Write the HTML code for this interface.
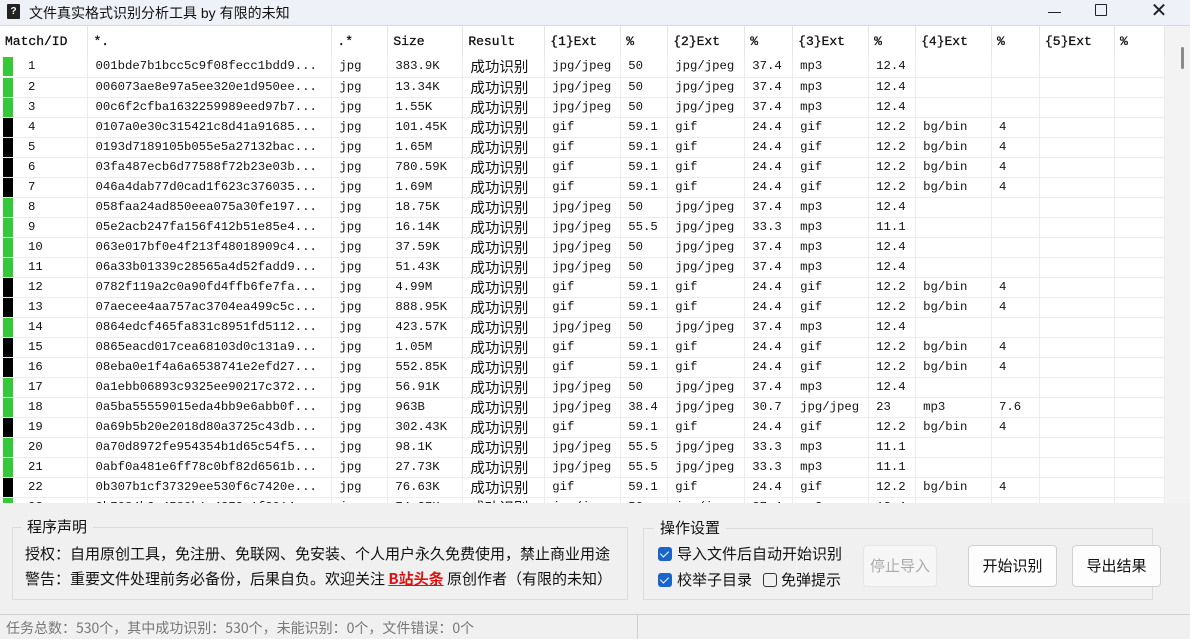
<!DOCTYPE html>
<html><head><meta charset="utf-8"><style>
*{margin:0;padding:0;box-sizing:border-box}
body{width:1190px;height:638px;overflow:hidden;background:#f0f0f0;font-family:"Liberation Sans","Noto Sans CJK SC",sans-serif;position:relative}
.title{position:absolute;left:0;top:0;width:1190px;height:26px;background:#eef2f8;border-bottom:1px solid #d6d9de}
.title .ic{position:absolute;left:7px;top:4px;width:13px;height:15px;background:#222;color:#fff;font:bold 10px "Liberation Sans";text-align:center;line-height:15px;border-radius:1px}
.title .t{position:absolute;left:29px;top:3px;font-size:14px;color:#111}
.wc{position:absolute;top:0;height:26px;width:46px;text-align:center}
.grid{position:absolute;left:0;top:26px;width:1165px;height:477px;overflow:hidden;background:#fff}
table{border-collapse:collapse;table-layout:fixed;font-family:"Liberation Mono","Noto Sans CJK SC",monospace;font-size:12.3px;color:#111}
td,th{border-right:1px solid #ececec;border-bottom:1px solid #ececec;height:20px;max-height:20px;white-space:nowrap;overflow:hidden;text-align:left;font-weight:normal;padding-left:7px;line-height:19px}
th{height:31px;font-size:13px;border-right:1px solid #e6e6e6;border-bottom:none;padding-left:5px;-webkit-text-stroke:0.3px #111}
td.c{font-family:"Noto Sans CJK SC",sans-serif;font-size:14.5px;line-height:17px;padding-top:0}
td.m{padding:0;position:relative}
td.m i{position:absolute;left:3px;top:0;width:10px;height:19px;background:#35c83a}
td.m.b i{background:#000}
td.m span{position:absolute;left:28px;top:0}
.sb{position:absolute;left:1165px;top:26px;width:25px;height:477px;background:#f3f3f3}
.sb i{position:absolute;left:16px;top:21px;width:3px;height:22px;background:#8a8a8a;border-radius:2px}
.gb{position:absolute;border:1px solid #dcdcdc;font-family:"Noto Sans CJK SC",sans-serif;font-size:15px;color:#111}
.gb .lg{position:absolute;top:-12px;background:#f0f0f0;padding:0 6px}
.btn{position:absolute;top:545px;height:42px;width:89px;border:1px solid #d0d0d0;border-radius:4px;background:#fdfdfd;font-family:"Noto Sans CJK SC",sans-serif;font-size:15px;text-align:center;line-height:40px;color:#111}
.cb{position:absolute;width:14px;height:14px;border-radius:3px;background:#1a66c8}
.cb:after{content:"";position:absolute;left:4px;top:2px;width:4px;height:7px;border:solid #fff;border-width:0 1.5px 1.5px 0;transform:rotate(45deg)}
.status{position:absolute;left:0;top:614px;width:1190px;height:24px;border-top:1px solid #cfcfcf;font-family:"Noto Sans CJK SC",sans-serif;font-size:14px;color:#777;padding:3px 0 0 6px}
</style></head><body>
<div class="title"><div class="ic">?</div><div class="t">文件真实格式识别分析工具 by 有限的未知</div>
<div class="wc" style="left:1031px"><div style="position:absolute;left:17px;top:12px;width:13px;height:1px;background:#222"></div></div>
<div class="wc" style="left:1078px"><div style="position:absolute;left:17px;top:4px;width:12px;height:12px;border:1px solid #222;border-radius:1px"></div></div>
<div class="wc" style="left:1136px;font-size:20px;line-height:22px;color:#222">✕</div>
</div>
<div class="grid"><table>
<colgroup><col style="width:88px"><col style="width:244px"><col style="width:56px"><col style="width:75px"><col style="width:82px"><col style="width:76px"><col style="width:47px"><col style="width:77px"><col style="width:48px"><col style="width:76px"><col style="width:47px"><col style="width:76px"><col style="width:48px"><col style="width:75px"><col style="width:50px"></colgroup>
<tr><th>Match/ID</th><th>*.</th><th>.*</th><th>Size</th><th>Result</th><th>{1}Ext</th><th>%</th><th>{2}Ext</th><th>%</th><th>{3}Ext</th><th>%</th><th>{4}Ext</th><th>%</th><th>{5}Ext</th><th>%</th></tr>
<tr><td class="m"><i></i><span>1</span></td><td>001bde7b1bcc5c9f08fecc1bdd9...</td><td>jpg</td><td>383.9K</td><td class="c">成功识别</td><td>jpg/jpeg</td><td>50</td><td>jpg/jpeg</td><td>37.4</td><td>mp3</td><td>12.4</td><td></td><td></td><td></td><td></td></tr>
<tr><td class="m"><i></i><span>2</span></td><td>006073ae8e97a5ee320e1d950ee...</td><td>jpg</td><td>13.34K</td><td class="c">成功识别</td><td>jpg/jpeg</td><td>50</td><td>jpg/jpeg</td><td>37.4</td><td>mp3</td><td>12.4</td><td></td><td></td><td></td><td></td></tr>
<tr><td class="m"><i></i><span>3</span></td><td>00c6f2cfba1632259989eed97b7...</td><td>jpg</td><td>1.55K</td><td class="c">成功识别</td><td>jpg/jpeg</td><td>50</td><td>jpg/jpeg</td><td>37.4</td><td>mp3</td><td>12.4</td><td></td><td></td><td></td><td></td></tr>
<tr><td class="m b"><i></i><span>4</span></td><td>0107a0e30c315421c8d41a91685...</td><td>jpg</td><td>101.45K</td><td class="c">成功识别</td><td>gif</td><td>59.1</td><td>gif</td><td>24.4</td><td>gif</td><td>12.2</td><td>bg/bin</td><td>4</td><td></td><td></td></tr>
<tr><td class="m b"><i></i><span>5</span></td><td>0193d7189105b055e5a27132bac...</td><td>jpg</td><td>1.65M</td><td class="c">成功识别</td><td>gif</td><td>59.1</td><td>gif</td><td>24.4</td><td>gif</td><td>12.2</td><td>bg/bin</td><td>4</td><td></td><td></td></tr>
<tr><td class="m b"><i></i><span>6</span></td><td>03fa487ecb6d77588f72b23e03b...</td><td>jpg</td><td>780.59K</td><td class="c">成功识别</td><td>gif</td><td>59.1</td><td>gif</td><td>24.4</td><td>gif</td><td>12.2</td><td>bg/bin</td><td>4</td><td></td><td></td></tr>
<tr><td class="m b"><i></i><span>7</span></td><td>046a4dab77d0cad1f623c376035...</td><td>jpg</td><td>1.69M</td><td class="c">成功识别</td><td>gif</td><td>59.1</td><td>gif</td><td>24.4</td><td>gif</td><td>12.2</td><td>bg/bin</td><td>4</td><td></td><td></td></tr>
<tr><td class="m"><i></i><span>8</span></td><td>058faa24ad850eea075a30fe197...</td><td>jpg</td><td>18.75K</td><td class="c">成功识别</td><td>jpg/jpeg</td><td>50</td><td>jpg/jpeg</td><td>37.4</td><td>mp3</td><td>12.4</td><td></td><td></td><td></td><td></td></tr>
<tr><td class="m"><i></i><span>9</span></td><td>05e2acb247fa156f412b51e85e4...</td><td>jpg</td><td>16.14K</td><td class="c">成功识别</td><td>jpg/jpeg</td><td>55.5</td><td>jpg/jpeg</td><td>33.3</td><td>mp3</td><td>11.1</td><td></td><td></td><td></td><td></td></tr>
<tr><td class="m"><i></i><span>10</span></td><td>063e017bf0e4f213f48018909c4...</td><td>jpg</td><td>37.59K</td><td class="c">成功识别</td><td>jpg/jpeg</td><td>50</td><td>jpg/jpeg</td><td>37.4</td><td>mp3</td><td>12.4</td><td></td><td></td><td></td><td></td></tr>
<tr><td class="m"><i></i><span>11</span></td><td>06a33b01339c28565a4d52fadd9...</td><td>jpg</td><td>51.43K</td><td class="c">成功识别</td><td>jpg/jpeg</td><td>50</td><td>jpg/jpeg</td><td>37.4</td><td>mp3</td><td>12.4</td><td></td><td></td><td></td><td></td></tr>
<tr><td class="m b"><i></i><span>12</span></td><td>0782f119a2c0a90fd4ffb6fe7fa...</td><td>jpg</td><td>4.99M</td><td class="c">成功识别</td><td>gif</td><td>59.1</td><td>gif</td><td>24.4</td><td>gif</td><td>12.2</td><td>bg/bin</td><td>4</td><td></td><td></td></tr>
<tr><td class="m b"><i></i><span>13</span></td><td>07aecee4aa757ac3704ea499c5c...</td><td>jpg</td><td>888.95K</td><td class="c">成功识别</td><td>gif</td><td>59.1</td><td>gif</td><td>24.4</td><td>gif</td><td>12.2</td><td>bg/bin</td><td>4</td><td></td><td></td></tr>
<tr><td class="m"><i></i><span>14</span></td><td>0864edcf465fa831c8951fd5112...</td><td>jpg</td><td>423.57K</td><td class="c">成功识别</td><td>jpg/jpeg</td><td>50</td><td>jpg/jpeg</td><td>37.4</td><td>mp3</td><td>12.4</td><td></td><td></td><td></td><td></td></tr>
<tr><td class="m b"><i></i><span>15</span></td><td>0865eacd017cea68103d0c131a9...</td><td>jpg</td><td>1.05M</td><td class="c">成功识别</td><td>gif</td><td>59.1</td><td>gif</td><td>24.4</td><td>gif</td><td>12.2</td><td>bg/bin</td><td>4</td><td></td><td></td></tr>
<tr><td class="m b"><i></i><span>16</span></td><td>08eba0e1f4a6a6538741e2efd27...</td><td>jpg</td><td>552.85K</td><td class="c">成功识别</td><td>gif</td><td>59.1</td><td>gif</td><td>24.4</td><td>gif</td><td>12.2</td><td>bg/bin</td><td>4</td><td></td><td></td></tr>
<tr><td class="m"><i></i><span>17</span></td><td>0a1ebb06893c9325ee90217c372...</td><td>jpg</td><td>56.91K</td><td class="c">成功识别</td><td>jpg/jpeg</td><td>50</td><td>jpg/jpeg</td><td>37.4</td><td>mp3</td><td>12.4</td><td></td><td></td><td></td><td></td></tr>
<tr><td class="m"><i></i><span>18</span></td><td>0a5ba55559015eda4bb9e6abb0f...</td><td>jpg</td><td>963B</td><td class="c">成功识别</td><td>jpg/jpeg</td><td>38.4</td><td>jpg/jpeg</td><td>30.7</td><td>jpg/jpeg</td><td>23</td><td>mp3</td><td>7.6</td><td></td><td></td></tr>
<tr><td class="m b"><i></i><span>19</span></td><td>0a69b5b20e2018d80a3725c43db...</td><td>jpg</td><td>302.43K</td><td class="c">成功识别</td><td>gif</td><td>59.1</td><td>gif</td><td>24.4</td><td>gif</td><td>12.2</td><td>bg/bin</td><td>4</td><td></td><td></td></tr>
<tr><td class="m"><i></i><span>20</span></td><td>0a70d8972fe954354b1d65c54f5...</td><td>jpg</td><td>98.1K</td><td class="c">成功识别</td><td>jpg/jpeg</td><td>55.5</td><td>jpg/jpeg</td><td>33.3</td><td>mp3</td><td>11.1</td><td></td><td></td><td></td><td></td></tr>
<tr><td class="m"><i></i><span>21</span></td><td>0abf0a481e6ff78c0bf82d6561b...</td><td>jpg</td><td>27.73K</td><td class="c">成功识别</td><td>jpg/jpeg</td><td>55.5</td><td>jpg/jpeg</td><td>33.3</td><td>mp3</td><td>11.1</td><td></td><td></td><td></td><td></td></tr>
<tr><td class="m b"><i></i><span>22</span></td><td>0b307b1cf37329ee530f6c7420e...</td><td>jpg</td><td>76.63K</td><td class="c">成功识别</td><td>gif</td><td>59.1</td><td>gif</td><td>24.4</td><td>gif</td><td>12.2</td><td>bg/bin</td><td>4</td><td></td><td></td></tr>
<tr><td class="m"><i></i><span>23</span></td><td>0b7084b2a4580b1e4372a1f3014...</td><td>jpg</td><td>74.37K</td><td class="c">成功识别</td><td>jpg/jpeg</td><td>50</td><td>jpg/jpeg</td><td>37.4</td><td>mp3</td><td>12.4</td><td></td><td></td><td></td><td></td></tr>
</table></div>
<div class="sb"><i></i></div>
<div class="gb" style="left:12px;top:527px;width:616px;height:73px"><div class="lg" style="left:8px">程序声明</div>
<div style="position:absolute;left:12px;top:15px;white-space:nowrap">授权：自用原创工具，免注册、免联网、免安装、个人用户永久免费使用，禁止商业用途</div>
<div style="position:absolute;left:12px;top:40px;white-space:nowrap">警告：重要文件处理前务必备份，后果自负。欢迎关注 <b style="color:#e01010;text-decoration:underline">B站头条</b> 原创作者（有限的未知）</div></div>
<div class="gb" style="left:643px;top:528px;width:510px;height:72px"><div class="lg" style="left:10px">操作设置</div>
<div class="cb" style="left:14px;top:18px"></div><div style="position:absolute;left:33px;top:14px;white-space:nowrap">导入文件后自动开始识别</div>
<div class="cb" style="left:14px;top:44px"></div><div style="position:absolute;left:33px;top:40px;white-space:nowrap">校举子目录</div>
<div style="position:absolute;left:119px;top:44px;width:14px;height:14px;border:1px solid #333;border-radius:3px"></div><div style="position:absolute;left:137px;top:40px;white-space:nowrap">免弹提示</div></div>
<div class="btn" style="left:863px;width:74px;color:#aaa;border-color:#e6e6e6;background:#f6f6f6">停止导入</div>
<div class="btn" style="left:968px">开始识别</div>
<div class="btn" style="left:1072px">导出结果</div>
<div class="status">任务总数：530个，其中成功识别：530个，未能识别：0个，文件错误：0个<div style="position:absolute;left:637px;top:0;width:1px;height:24px;background:#cfcfcf"></div></div>
</body></html>
